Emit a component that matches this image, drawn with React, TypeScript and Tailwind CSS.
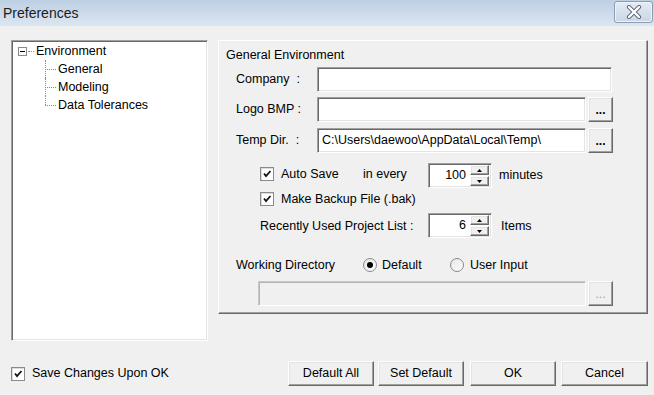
import { ReactNode } from "react";

const sunken =
  "border border-t-[#a0a0a0] border-l-[#a0a0a0] border-b-white border-r-white shadow-[inset_1px_1px_0_#696969,inset_-1px_-1px_0_#e3e3e3]";
const raised =
  "border border-t-white border-l-white border-b-[#696969] border-r-[#696969] shadow-[inset_-1px_-1px_0_#a0a0a0,inset_1px_1px_0_#e3e3e3] bg-[#f0f0f0]";

function CheckBox({ checked = true }: { checked?: boolean }) {
  return (
    <div className="w-[14px] h-[14px] shrink-0 bg-white border border-[#8a8a8a] shadow-[inset_1px_1px_0_#dcdcdc] flex items-center justify-center">
      {checked && (
        <svg width="10" height="10" viewBox="0 0 10 10">
          <path d="M2 4.5 L4 7 L8.5 2" stroke="#111" strokeWidth="1.8" fill="none" />
        </svg>
      )}
    </div>
  );
}

function Radio({ checked }: { checked?: boolean }) {
  return (
    <div className="w-[14px] h-[14px] shrink-0 rounded-full border border-[#8a8a8a] bg-linear-to-br from-[#e6e6e6] to-white flex items-center justify-center">
      {checked && <div className="w-[6px] h-[6px] rounded-full bg-black" />}
    </div>
  );
}

function DotsButton({ disabled }: { disabled?: boolean }) {
  return (
    <div
      className={`${raised} w-[25px] h-[25px] flex items-end justify-center pb-[5px] text-[12px] font-bold leading-none ${
        disabled ? "text-[#a0a0a0] font-normal" : "text-black"
      }`}
    >
      ...
    </div>
  );
}

function TextBox({ width, value, disabled }: { width: string; value?: string; disabled?: boolean }) {
  return (
    <div
      className={`${sunken} ${width} h-[25px] flex items-center px-[4px] ${
        disabled ? "bg-[#f0f0f0] border-t-[#c8c8c8] border-l-[#c8c8c8] shadow-[inset_1px_1px_0_#b4b4b4]" : "bg-white"
      }`}
    >
      {value}
    </div>
  );
}

function Spin({ value }: { value: string }) {
  return (
    <div className={`${sunken} w-[64px] h-[25px] bg-white flex items-center`}>
      <span className="flex-1 text-right pr-[4px]">{value}</span>
      <div className="flex flex-col w-[19px] mr-[2px] gap-[1px]">
        <div className={`${raised} h-[10px] flex items-center justify-center`}>
          <svg width="5" height="3" viewBox="0 0 5 3">
            <path d="M0 3 L2.5 0 L5 3 Z" fill="#000" />
          </svg>
        </div>
        <div className={`${raised} h-[10px] flex items-center justify-center`}>
          <svg width="5" height="3" viewBox="0 0 5 3">
            <path d="M0 0 L5 0 L2.5 3 Z" fill="#000" />
          </svg>
        </div>
      </div>
    </div>
  );
}

function TreeChild({ label, last }: { label: string; last?: boolean }) {
  return (
    <div className="flex h-[18px] items-center">
      <div className="relative w-[13px] h-full">
        <div
          className={`absolute left-0 top-0 border-l border-dotted border-[#8a8a8a] ${last ? "h-1/2" : "h-full"}`}
        />
        <div className="absolute left-0 top-1/2 w-[11px] border-t border-dotted border-[#8a8a8a]" />
      </div>
      <span>{label}</span>
    </div>
  );
}

function Button({ width, children }: { width: string; children: ReactNode }) {
  return (
    <div className={`${raised} ${width} h-[25px] flex items-center justify-center`}>{children}</div>
  );
}

export default function App() {
  return (
    <div className="w-[654px] h-[395px] bg-[#f0f0f0] flex flex-col font-['Liberation_Sans',Arial,sans-serif] text-[12.5px] text-black overflow-hidden">
      {/* title bar */}
      <div className="h-[26px] bg-linear-to-b from-[#bdcfe3] to-[#dbe6f2] flex items-start justify-between pl-[3px]">
        <span className="text-[14px] text-[#1c1c1c] leading-[26px]">Preferences</span>
        <div className="mt-[1px] mr-[1px] w-[39px] h-[22px] rounded-[3px] border border-[#8d9cb0] bg-linear-to-b from-[#e4ecf5] to-[#c9d6e5] shadow-[inset_0_0_0_1px_#eef3f9] flex items-center justify-center">
          <svg width="16" height="14" viewBox="0 0 16 14">
            <path d="M3 2 L13 12 M13 2 L3 12" stroke="#5d6673" strokeWidth="4.2" strokeLinecap="round" />
            <path d="M3 2 L13 12 M13 2 L3 12" stroke="#ffffff" strokeWidth="2.4" strokeLinecap="round" />
          </svg>
        </div>
      </div>

      <div className="flex flex-col pl-[11px] pr-[6px] pt-[14px]">
        <div className="flex gap-[10px] items-start">
          {/* tree */}
          <div className={`${sunken} w-[197px] h-[301px] bg-white pt-[1px] pl-[6px]`}>
            <div className="flex h-[18px] items-center">
              <div className="w-[9px] h-[9px] border border-[#8a8a8a] bg-white flex items-center justify-center">
                <div className="w-[5px] border-t border-black" />
              </div>
              <div className="w-[6px] ml-[1px] border-t border-dotted border-[#8a8a8a]" />
              <span className="ml-[2px]">Environment</span>
            </div>
            <div className="ml-[27px]">
              <TreeChild label="General" />
              <TreeChild label="Modeling" />
              <TreeChild label="Data Tolerances" last />
            </div>
          </div>

          {/* general environment panel */}
          <div className={`${raised} shadow-[inset_-1px_-1px_0_#a0a0a0] w-[430px] h-[274px] flex flex-col pl-[7px] pt-[6px]`}>
            <div className="h-[16px] flex items-center">General Environment</div>

            <div className="flex items-center mt-[4px] h-[25px] pl-[10px]">
              <span className="w-[81px]">Company&nbsp;&nbsp;:</span>
              <TextBox width="w-[295px]" />
            </div>
            <div className="flex items-center mt-[5px] h-[25px] pl-[10px] gap-[2px]">
              <span className="w-[79px]">Logo BMP :</span>
              <TextBox width="w-[269px]" />
              <DotsButton />
            </div>
            <div className="flex items-center mt-[6px] h-[25px] pl-[10px] gap-[2px]">
              <span className="w-[79px]">Temp Dir.&nbsp;&nbsp;:</span>
              <TextBox width="w-[269px]" value="C:\Users\daewoo\AppData\Local\Temp\" />
              <DotsButton />
            </div>

            <div className="flex items-center mt-[10px] h-[25px] pl-[34px]">
              <div className="flex items-center -mt-[3px]">
                <CheckBox />
                <span className="ml-[7px] w-[82px]">Auto Save</span>
                <span className="w-[65px]">in every</span>
              </div>
              <Spin value="100" />
              <span className="ml-[7px]">minutes</span>
            </div>
            <div className="flex items-center mt-[4px] h-[14px] pl-[34px]">
              <CheckBox />
              <span className="ml-[7px]">Make Backup File (.bak)</span>
            </div>
            <div className="flex items-center mt-[7px] h-[25px] pl-[34px]">
              <span className="w-[168px] mt-[2px]">Recently Used Project List :</span>
              <Spin value="6" />
              <span className="ml-[9px] mt-[2px]">Items</span>
            </div>

            <div className="flex items-center mt-[19px] h-[16px] pl-[10px]">
              <span className="w-[127px]">Working Directory</span>
              <Radio checked />
              <span className="ml-[5px] w-[68px]">Default</span>
              <Radio />
              <span className="ml-[6px]">User Input</span>
            </div>
            <div className="flex items-center mt-[8px] h-[25px] pl-[32px] gap-[2px]">
              <TextBox width="w-[328px]" disabled />
              <DotsButton disabled />
            </div>
          </div>
        </div>

        {/* bottom row */}
        <div className="flex items-center mt-[20px] h-[25px]">
          <CheckBox />
          <span className="ml-[7px]">Save Changes Upon OK</span>
          <div className="ml-auto flex items-center">
            <Button width="w-[86px]">Default All</Button>
            <div className="w-[4px]" />
            <Button width="w-[86px]">Set Default</Button>
            <div className="w-[6px]" />
            <Button width="w-[86px]">OK</Button>
            <div className="w-[5px]" />
            <Button width="w-[87px]">Cancel</Button>
          </div>
        </div>
      </div>
    </div>
  );
}
